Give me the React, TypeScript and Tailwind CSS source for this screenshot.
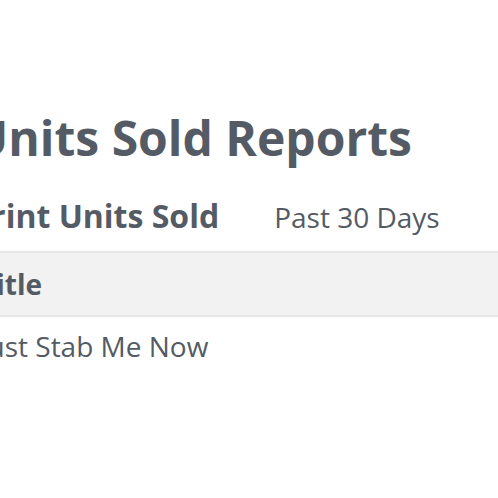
export default function App() {
  return (
    <div className="w-[498px] h-[498px] overflow-hidden bg-white" style={{ fontFamily: '"Open Sans", sans-serif' }}>
      <div className="-ml-[28px] w-[560px] pt-[102px] text-[#545b64]">
        <h1 className="text-[48px] font-bold leading-[72px]">Units Sold Reports</h1>
        <div className="flex items-baseline mt-[20px] h-[44px]">
          <h2 className="text-[32px] font-bold leading-[44px] -ml-[1px]">Print Units Sold</h2>
          <span className="ml-[55px] text-[28px] leading-[44px]">Past 30 Days</span>
        </div>
        <table className="mt-[13px] w-full border-collapse">
          <thead>
            <tr className="bg-[#f2f2f2] border-y-2 border-[#e6e6e6]">
              <th className="text-left text-[28px] font-bold h-[64px] px-[8px]">Title</th>
            </tr>
          </thead>
          <tbody>
            <tr>
              <td className="text-[28px] px-[8px] pt-[8px] pb-[14px]">Just Stab Me Now</td>
            </tr>
          </tbody>
        </table>
      </div>
    </div>
  );
}
